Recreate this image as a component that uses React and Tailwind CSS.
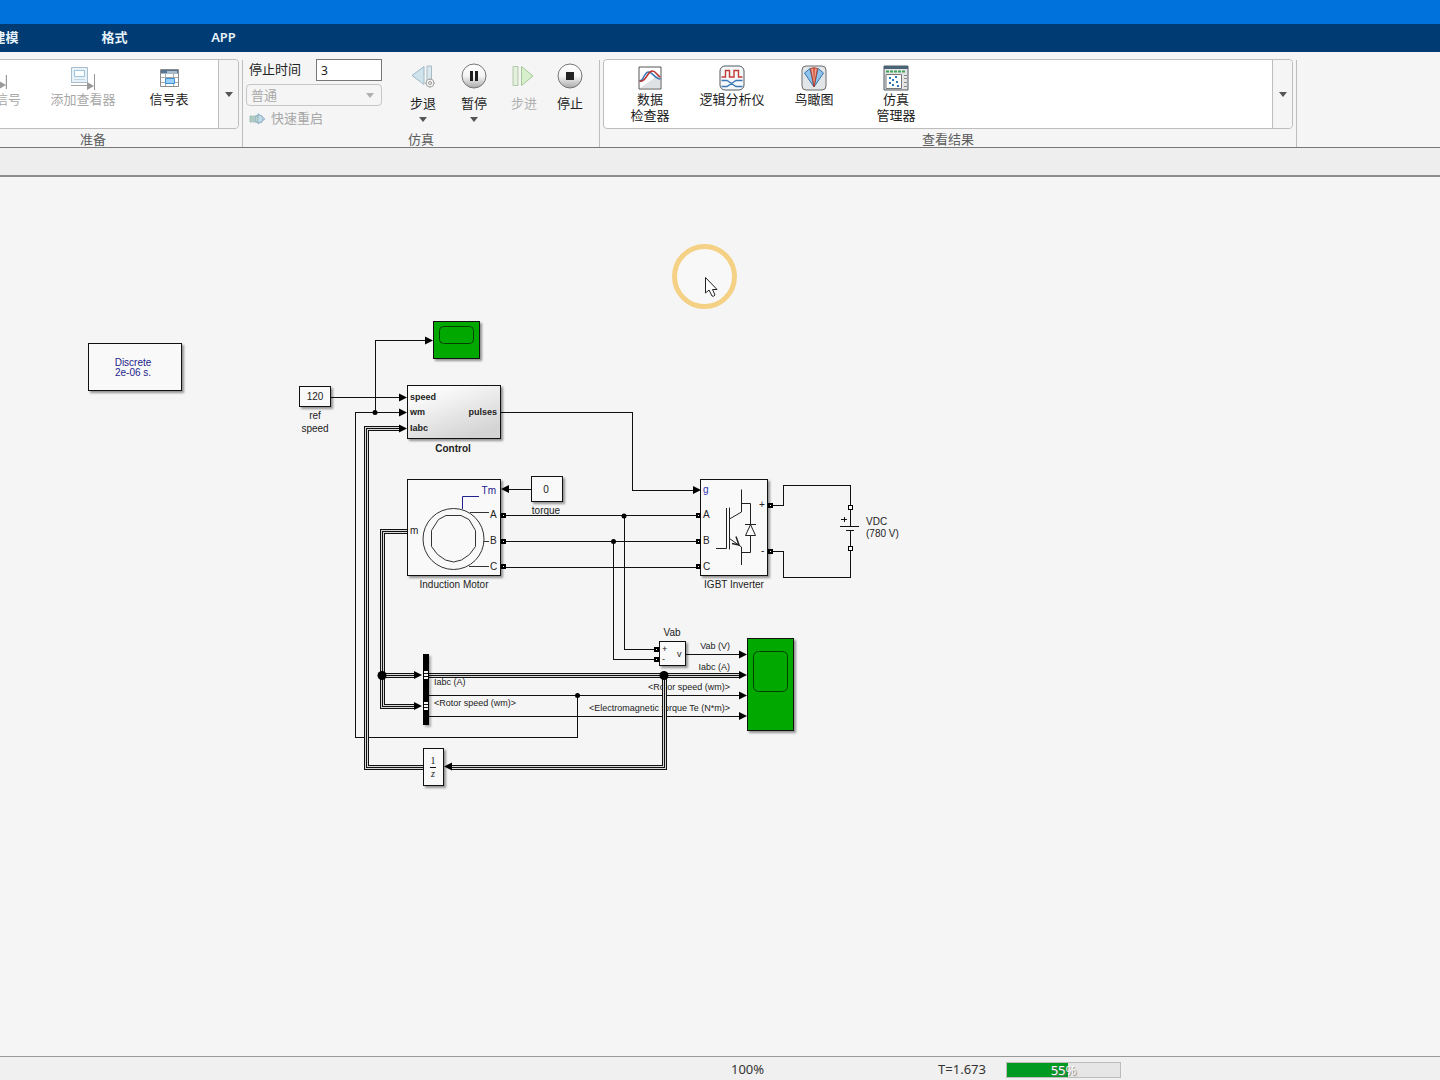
import { useState } from "react";

const uiFont = "font-['Noto_Sans','Noto_Sans_CJK_SC',sans-serif]";

/* ---------- ICONS ---------- */

const SignalIcon = () => (
  <svg width="24" height="24" viewBox="0 0 24 24" fill="none">
    <path d="M3 4h12v12H3z" fill="#eef5fa" stroke="#b5bcc2" />
    <path d="M2 19h14M23.5 9v14" stroke="#9a9a9a" strokeWidth="1.4" />
    <path d="M16 15l7 4-7 4z" fill="#9a9a9a" />
  </svg>
);

const ViewerIcon = () => (
  <svg width="26" height="24" viewBox="0 0 26 24" fill="none">
    <path d="M1.5 1.5h16v15h-16z" fill="#e6f1f8" stroke="#a9bdca" />
    <path d="M4.5 4.500h10v6h-10z" fill="#fbfdff" stroke="#9fc3dc" />
    <path d="M4 13.500h11" stroke="#c4d6e2" />
    <path d="M1 19.500h16" stroke="#a5a5a5" />
    <path d="M17 16l7 4-7 4z" fill="#999" />
    <path d="M24.5 8v16" stroke="#999" />
  </svg>
);

const TableIcon = () => (
  <svg width="19" height="18" viewBox="0 0 19 18" fill="none">
    <path d="M.5.5h18v17H.5z" fill="#fff" stroke="#8b8b8b" />
    <path d="M1 1h17v3.500H1z" fill="#56738f" />
    <path d="M7 2h10v2H7z" fill="#a9bccd" />
    <path d="M1 8.500h17M1 13.500h17M5.500 5v12M13.500 5v12" stroke="#a8a8a8" />
    <path d="M5.500 9.500h9v5h-9z" fill="#9cd0fa" stroke="#3b8fd6" />
  </svg>
);

const StepBackIcon = () => (
  <svg width="26" height="26" viewBox="0 0 26 26" fill="none">
    <path d="M14 3.500v18L2 12.500z" fill="#cfe3ec" stroke="#9fb9c6" />
    <path d="M17 3h4.500v18H17z" fill="#dbe9ef" stroke="#a8bcc6" />
    <circle cx="20" cy="20" r="4" fill="#f4f4f4" stroke="#a5a5a5" />
    <circle cx="20" cy="20" r="1.500" stroke="#999" />
    <path d="M20 15v2M20 23v2M15 20h2M23 20h2" stroke="#aaa" />
  </svg>
);

const StepForwardIcon = () => (
  <svg width="26" height="26" viewBox="0 0 26 26" fill="none">
    <path d="M2 3.500h5v19H2z" fill="#e3f0dc" stroke="#b3c9ab" />
    <path d="M10.500 3.500v19L22 13z" fill="#d8efcb" stroke="#a6c79a" />
  </svg>
);

const RoundIcon = ({ children, id }) => (
  <svg width="26" height="26" viewBox="0 0 26 26">
    <defs>
      <linearGradient id={id} x1="0" y1="0" x2="0" y2="1">
        <stop offset="0" stopColor="#fff" />
        <stop offset=".5" stopColor="#f5f5f5" />
        <stop offset="1" stopColor="#a9a9a9" />
      </linearGradient>
    </defs>
    <circle cx="13" cy="13" r="12" fill={`url(#${id})`} stroke="#757575" />
    {children}
  </svg>
);

const PauseIcon = () => (
  <RoundIcon id="pauseFill">
    <path d="M9 8h3v10H9zM14 8h3v10h-3z" fill="#1c1c1c" />
  </RoundIcon>
);

const StopIcon = () => (
  <RoundIcon id="stopFill">
    <path d="M9 9h8v8H9z" fill="#222" />
  </RoundIcon>
);

const RestartIcon = () => (
  <svg width="17" height="14" viewBox="0 0 17 14" fill="none">
    <path d="M1 4h2v6H1zM4 4h5v6H4z" fill="#b9d6cb" stroke="#9dbcb3" />
    <path d="M9 1.500L16 7l-7 5z" fill="#c3dcea" stroke="#9dbccd" />
    <circle cx="10" cy="7" r="4" stroke="#93b4c6" />
  </svg>
);

const InspectorIcon = () => (
  <svg width="24" height="24" viewBox="0 0 24 24" fill="none">
    <path d="M1 1h22v22H1z" fill="#fff" stroke="#555" />
    <path d="M2 22L22 8v14z" fill="#dfe2e4" />
    <path d="M1.500 14C5 17 6 6 10.500 6s6 7 12 7" stroke="#3a78b5" strokeWidth="1.500" />
    <path d="M1.500 15C8 17 9 5 14.500 5c4 0 5 6 8 6" stroke="#b8322f" strokeWidth="1.500" />
  </svg>
);

const LogicIcon = () => (
  <svg width="26" height="26" viewBox="0 0 26 26" fill="none">
    <rect x="1" y="1" width="24" height="24" rx="5" fill="#f4f8fb" stroke="#555b60" />
    <path d="M2.500 12h4V5.500h4V12h4.500V5.500h4.500V12h4" stroke="#c43c36" strokeWidth="1.400" />
    <path d="M2.500 15.500H8l9 6h6.500M2.500 21.500H8l9-6h6.500" stroke="#3c79b4" strokeWidth="1.300" />
  </svg>
);

const BirdEyeIcon = () => (
  <svg width="26" height="26" viewBox="0 0 26 26" fill="none">
    <rect x="1" y="1" width="24" height="24" rx="4" fill="#e3e6e8" stroke="#6b6b6b" />
    <path d="M13 22L3.500 8 9 3.500z" fill="#8fc3ec" stroke="#3576ad" />
    <path d="M13 22L22.500 8 17 3.500z" fill="#8fc3ec" stroke="#3576ad" />
    <path d="M13 22L9.500 3.500q3.500-1.500 7 0z" fill="#f0a590" stroke="#ab3f31" />
    <path d="M13 21L12 3h2z" fill="#d3533f" />
  </svg>
);

const ManagerIcon = () => (
  <svg width="26" height="26" viewBox="0 0 26 26" fill="none">
    <path d="M1 1h24v24H1z" fill="#e4e4e4" stroke="#4f5960" />
    <path d="M1 1h24v3H1z" fill="#4a6376" />
    <path d="M3 6.500h20" stroke="#3da35a" strokeWidth="2" strokeDasharray="3 1" />
    <path d="M3 9.500h15.500v14H3z" fill="#fff" stroke="#777" />
    <path d="M6 13h2M12 12h2M9 15h2M6 18h2M13 17h2M9 20h2M14 21h2" stroke="#2e77b8" strokeWidth="2" />
    <path d="M21 10.500h3M21 13.500h3M21 17.500h3M21 21.500h3" stroke="#888" />
  </svg>
);

const Caret = ({ color = "#555" }) => (
  <svg width="8" height="5" viewBox="0 0 8 5" fill={color}>
    <path d="M0 0h8L4 5z" />
  </svg>
);

/* ---------- TOOLSTRIP ---------- */

const previewItems = [
  { label: "记录信号", Icon: SignalIcon, width: "w-[88px]", off: true },
  { label: "添加查看器", Icon: ViewerIcon, width: "w-[88px]", off: true },
  { label: "信号表", Icon: TableIcon, width: "w-[84px]" },
];

const resultItems = [
  { label: "数据\n检查器", Icon: InspectorIcon },
  { label: "逻辑分析仪", Icon: LogicIcon },
  { label: "鸟瞰图", Icon: BirdEyeIcon },
  { label: "仿真\n管理器", Icon: ManagerIcon },
];

const runItems = [
  { label: "步退", Icon: StepBackIcon, width: "w-[50px]", menu: true },
  { label: "暂停", Icon: PauseIcon, width: "w-[52px]", menu: true },
  { label: "步进", Icon: StepForwardIcon, width: "w-12", off: true },
  { label: "停止", Icon: StopIcon, width: "w-11" },
];

function Section({ title, className, children }) {
  return (
    <section className={`flex shrink-0 flex-col pt-[7px] ${className}`}>
      <div className="h-[70px] shrink-0">{children}</div>
      <h2 className="pt-[2px] text-center text-[13px] leading-4 text-[#5c5c5c]">{title}</h2>
    </section>
  );
}

function GalleryButton({ label, Icon, width = "w-[82px]", off }) {
  return (
    <button
      disabled={off}
      className={`flex shrink-0 flex-col items-center pt-[5px] text-[13px] leading-4 whitespace-pre ${width} ${off ? "text-[#a8a8a8]" : "text-[#222]"}`}
    >
      <span className="flex h-[26px] items-center"><Icon /></span>
      {label}
    </button>
  );
}

function Gallery({ children }) {
  return (
    <div className="flex h-full rounded border border-[#bdbdbd] bg-white">
      <div className="flex flex-1">{children}</div>
      <button aria-label="更多" className="flex w-5 items-center justify-center rounded-r border-l border-[#bdbdbd] bg-[#f5f5f5]">
        <Caret />
      </button>
    </div>
  );
}

function Toolstrip() {
  const [stopTime, setStopTime] = useState("3");

  return (
    <div className="flex h-24 overflow-hidden border-b border-[#777] bg-[#f5f5f5]">
      <Section title="准备" className="-ml-[53px] w-[295px] pr-[3px]">
        <Gallery>
          <div className="flex pl-[3px]">
            {previewItems.map(item => <GalleryButton key={item.label} {...item} />)}
          </div>
        </Gallery>
      </Section>

      <div className="mt-2 w-px shrink-0 bg-[#bdbdbd]" />

      <Section title="仿真" className="w-[356px]">
        <div className="flex pl-[3px]">
          <div className="flex w-[136px] flex-col gap-[3px] text-[13px]">
            <div className="flex h-[22px] items-center justify-between pl-[3px] text-[#222]">
              <label htmlFor="stopTime">停止时间</label>
              <input
                id="stopTime"
                value={stopTime}
                onChange={e => setStopTime(e.target.value)}
                className="h-[22px] w-[66px] border border-[#777] bg-white px-1 text-xs"
              />
            </div>
            <div className="grid items-center">
              <select
                disabled
                aria-label="仿真模式"
                className="col-start-1 row-start-1 h-[22px] appearance-none rounded border border-[#c6c6c6] px-1 leading-5 text-[#a8a8a8] opacity-100"
              >
                <option>普通</option>
              </select>
              <span className="pointer-events-none col-start-1 row-start-1 mr-2 justify-self-end"><Caret color="#b0b0b0" /></span>
            </div>
            <button disabled className="flex h-5 items-center gap-[5px] pl-[3px] text-[#a8a8a8]">
              <RestartIcon /> 快速重启
            </button>
          </div>

          <div className="flex pl-4">
            {runItems.map(({ label, Icon, width, off, menu }) => (
              <button
                key={label}
                disabled={off}
                className={`flex flex-col items-center pt-1 text-[13px] leading-4 ${width} ${off ? "text-[#b0b0b0]" : "text-[#222]"}`}
              >
                <Icon />
                <span className="py-[6px]">{label}</span>
                {menu && <Caret />}
              </button>
            ))}
          </div>
        </div>
      </Section>

      <div className="mt-2 w-px shrink-0 bg-[#bdbdbd]" />

      <Section title="查看结果" className="w-[696px] px-[3px]">
        <Gallery>
          <div className="flex pl-[5px]">
            {resultItems.map(item => <GalleryButton key={item.label} {...item} />)}
          </div>
        </Gallery>
      </Section>

      <div className="mt-2 w-px shrink-0 bg-[#bdbdbd]" />
    </div>
  );
}

/* ---------- DIAGRAM ---------- */

const Wire = ({ d }) => <path d={d} fill="none" stroke="#111" shapeRendering="crispEdges" />;

// three parallel lines
const Bus = ({ d }) => (
  <g fill="none" shapeRendering="crispEdges">
    <path d={d} stroke="#111" strokeWidth="5" />
    <path d={d} stroke="#d8d8d8" strokeWidth="3" />
    <path d={d} stroke="#111" strokeWidth="1" />
  </g>
);

const ArrowR = ({ x, y }) => <path d={`M${x} ${y}l-8-4v8z`} fill="#000" />;
const ArrowL = ({ x, y }) => <path d={`M${x} ${y}l8-4v8z`} fill="#000" />;
const Dot = ({ x, y, r = 2.5 }) => <circle cx={x} cy={y} r={r} fill="#000" />;

const Port = ({ x, y, open }) => (
  <g shapeRendering="crispEdges">
    <rect x={x - 2} y={y - 2} width="5" height="5" fill="#000" />
    <rect x={open ? x - 1 : x} y={open ? y - 1 : y} width={open ? 3 : 1} height={open ? 3 : 1} fill="#fff" />
  </g>
);

const Block = ({ x, y, w, h, fill = "#f9f9f9" }) => (
  <rect
    x={x} y={y} width={w} height={h} fill={fill} stroke="#111"
    className="drop-shadow-[2px_2px_1px_rgba(0,0,0,0.4)]"
  />
);

function Diagram() {
  return (
    <svg
      width="940" height="640" viewBox="0 177 940 640"
      className="block font-['Liberation_Sans',Arial,sans-serif] text-[10px]"
      fill="#222"
    >
      <defs>
        <linearGradient id="controlFill" x1="0" y1="0" x2="0.6" y2="1">
          <stop offset="0.2" stopColor="#fbfbfb" />
          <stop offset="1" stopColor="#d4d4d4" />
        </linearGradient>
      </defs>

      {/* labels that the wires cross */}
      <g className="text-[9px]">
        <text x="434" y="685">Iabc (A)</text>
        <text x="434" y="706">&lt;Rotor speed (wm)&gt;</text>
        <g textAnchor="end">
          <text x="730" y="649">Vab (V)</text>
          <text x="730" y="670">Iabc (A)</text>
          <text x="730" y="690">&lt;Rotor speed (wm)&gt;</text>
          <text x="730" y="711">&lt;Electromagnetic torque Te (N*m)&gt;</text>
        </g>
      </g>

      {/* signal wires */}
      <Wire d="M331 397.500H400" />
      <Wire d="M577.500 695.500V737.500H355.500V412.500H400" />
      <Wire d="M375.500 412.500V340.500H426" />
      <Wire d="M501 412.500H632.500V490.500H693" />
      <Wire d="M509 489.500H531" />
      <Wire d="M505 515.500H696M505 541.500H696M505 567.500H696" />
      <Wire d="M624.500 515.500V649.500H655M613.500 541.500V659.500H655" />
      <Wire d="M686 654.500H740M429 695.500H740M429 716.500H740" />
      <Wire d="M773 505.500H783.500V485.500H850.500V506M773 551.500H783.500V577.500H850.500V550" />

      {/* buses */}
      <Bus d="M407 531.500H382.500V706.500H415" />
      <Bus d="M382 675.500H415" />
      <Bus d="M423 767.500H366.500V428.500H400" />
      <Bus d="M429 675.500H739" />
      <Bus d="M452 767.500H664.500V675" />

      <Dot x={375} y={412.5} />
      <Dot x={624} y={516} />
      <Dot x={613.5} y={541.5} />
      <Dot x={577.5} y={695.5} />
      <Dot x={382} y={675.5} r={4.5} />
      <Dot x={664} y={675.5} r={4.5} />

      <ArrowR x={433} y={340.5} />
      <ArrowR x={407} y={397.5} />
      <ArrowR x={407} y={412.5} />
      <ArrowR x={407} y={428.5} />
      <ArrowR x={701} y={490} />
      <ArrowR x={422} y={675} />
      <ArrowR x={422} y={706} />
      <ArrowR x={747} y={654.5} />
      <ArrowR x={747} y={675} />
      <ArrowR x={747} y={695.5} />
      <ArrowR x={747} y={716} />
      <ArrowL x={501} y={489} />
      <ArrowL x={444} y={766.5} />

      {/* powergui */}
      <Block x={88.5} y={343.5} w={93} h={47} />
      <g fill="#22228c" textAnchor="middle">
        <text x="133" y="366">Discrete</text>
        <text x="133" y="376">2e-06 s.</text>
      </g>

      {/* ref speed */}
      <Block x={299.5} y={386.5} w={31} h={20} />
      <g textAnchor="middle">
        <text x="315" y="400">120</text>
        <text x="315" y="419">ref</text>
        <text x="315" y="432">speed</text>
      </g>

      {/* control */}
      <Block x={407.5} y={385.5} w={93} h={53} fill="url(#controlFill)" />
      <g className="text-[9px] font-bold">
        <text x="410" y="400">speed</text>
        <text x="410" y="415">wm</text>
        <text x="410" y="431">Iabc</text>
        <text x="497" y="415" textAnchor="end">pulses</text>
      </g>
      <text x="453" y="452" textAnchor="middle" className="font-bold">Control</text>

      {/* torque */}
      <Block x={531.5} y={476.5} w={31} h={25} />
      <text x="546" y="493" textAnchor="middle">0</text>
      <text x="546" y="514" textAnchor="middle">torque</text>

      {/* induction motor */}
      <Block x={407.5} y={479.5} w={93} h={96} />
      <g fill="none" stroke="#333">
        <circle cx="453.500" cy="539" r="30.500" />
        <path d="M446 515.500h15l8 4 6.500 11v16l-6 8-8 5.500-8 2-8-2-8-5.500-6-8v-16l7-11z" />
        <path d="M470 512.500h19M484 541.500h5M469 566.500h20" />
        <path d="M462.500 509v-12.500H479" stroke="#22228c" />
      </g>
      <text x="496" y="494" textAnchor="end" fill="#22228c">Tm</text>
      <text x="490" y="518">A</text>
      <text x="490" y="544">B</text>
      <text x="490" y="570">C</text>
      <text x="410" y="534">m</text>
      <text x="454" y="588" textAnchor="middle">Induction Motor</text>
      <Port x={503} y={515} />
      <Port x={503} y={541} />
      <Port x={503} y={566} />

      {/* inverter */}
      <Block x={700.5} y={479.5} w={67} h={96} />
      <g fill="none" stroke="#222">
        <path d="M716 548.500h10.500V508M729.500 507.500V549.500" />
        <path d="M741.500 489.500V512L729.500 519M729.500 538.500L741.500 547V565" />
        <path d="M732 543.500l7 1.500-3-8.500" strokeWidth="1.500" />
        <path d="M741.500 503.500h9V524M745 524.500h11M750.500 524.500l-5 11h10zM750.500 536V552.500h-9" />
      </g>
      <text x="703" y="493" fill="#3333b0">g</text>
      <text x="703" y="518">A</text>
      <text x="703" y="544">B</text>
      <text x="703" y="570">C</text>
      <text x="759" y="508">+</text>
      <text x="761" y="554">-</text>
      <text x="734" y="588" textAnchor="middle">IGBT Inverter</text>
      <Port x={698} y={515} />
      <Port x={698} y={541} />
      <Port x={698} y={566} />
      <Port x={770} y={505} />
      <Port x={770} y={551} />

      {/* battery */}
      <Wire d="M850.500 509V526M840 526.500H859M846 530.500H854M850.500 530V546M844 517V522M841 519.500H847" />
      <Port x={850} y={507} open />
      <Port x={850} y={548} open />
      <text x="866" y="525">VDC</text>
      <text x="866" y="537">(780 V)</text>

      {/* voltage measurement */}
      <Block x={659.5} y={641.5} w={26} h={24} />
      <text x="672" y="636" textAnchor="middle">Vab</text>
      <g className="text-[9px]">
        <text x="662" y="652">+</text>
        <text x="662" y="662">-</text>
        <text x="677" y="657">v</text>
      </g>
      <Port x={656} y={649} />
      <Port x={656} y={659} />

      {/* bus selector */}
      <path d="M423 654h6v71h-6z" fill="#000" className="drop-shadow-[2px_2px_1px_rgba(0,0,0,0.3)]" />
      <path d="M424 671h4v8h-4zM424 702h4v8h-4z" fill="#f5f5f5" />
      <Wire d="M424 673.500h4M424 676.500h4M424 704.500h4M424 707.500h4" />

      {/* unit delay */}
      <Block x={423.5} y={748.5} w={20} h={37} />
      <g textAnchor="middle" className="font-['Liberation_Serif',serif]">
        <text x="433" y="764">1</text>
        <text x="433" y="777" className="italic">z</text>
      </g>
      <Wire d="M430 767.500H436" />

      {/* scopes */}
      <Block x={433.5} y={321.500} w={46} h={37} fill="#00a800" />
      <rect x="439.500" y="326.500" width="34" height="17" rx="4" fill="none" stroke="#063f06" />
      <Block x={747.5} y={638.500} w={46} h={92} fill="#00a800" />
      <rect x="753.500" y="651.500" width="34" height="40" rx="5" fill="none" stroke="#063f06" />
    </svg>
  );
}

const Pointer = () => (
  <svg className="pointer-events-none absolute top-[66px] left-[671px]" width="67" height="67" viewBox="0 0 67 67">
    <circle cx="33.500" cy="33.500" r="30" fill="#f8f8f9" stroke="#f4d184" strokeWidth="5" />
    <path d="M34.500 34.500v15.500l3.500-3 3 6q1.500 1 3-1l-2.500-5.500h4.500z" fill="#fff" stroke="#222" />
  </svg>
);

/* ---------- PAGE ---------- */

export default function App() {
  const progress = 54;

  return (
    <div className={`flex min-h-screen flex-col overflow-hidden bg-[#f5f5f5] ${uiFont}`}>
      <div className="h-6 bg-[#0072dc]" />

      <nav className="flex h-7 items-center bg-[#003b73] text-[13px] font-bold text-[#e6f2fa]">
        <button className="-ml-[49px] w-[109px]">建模</button>
        <button className="w-[109px]">格式</button>
        <button className="w-[109px] font-semibold">APP</button>
      </nav>

      <Toolstrip />

      <div className="h-[29px] border-b-2 border-[#8c8c8c] bg-[#eeeeee]" />

      <main className="relative flex-1">
        <Diagram />
        <Pointer />
      </main>

      <footer className="flex h-6 items-center justify-end border-t border-[#999] bg-[#f0f0f0] pt-[2px] pr-[319px] text-[13px] text-[#333]">
        <span className="mr-[174px]">100%</span>
        <span className="mr-5">T=1.673</span>
        <div className="grid h-4 w-[115px] border border-[#bcbcbc] bg-[#e6e6e6]">
          <div className="col-start-1 row-start-1 bg-[#009a22]" style={{ width: `${progress}%` }} />
          <span className="col-start-1 row-start-1 text-center leading-[14px] text-white [text-shadow:1px_1px_1px_#777]">55%</span>
        </div>
      </footer>
    </div>
  );
}
